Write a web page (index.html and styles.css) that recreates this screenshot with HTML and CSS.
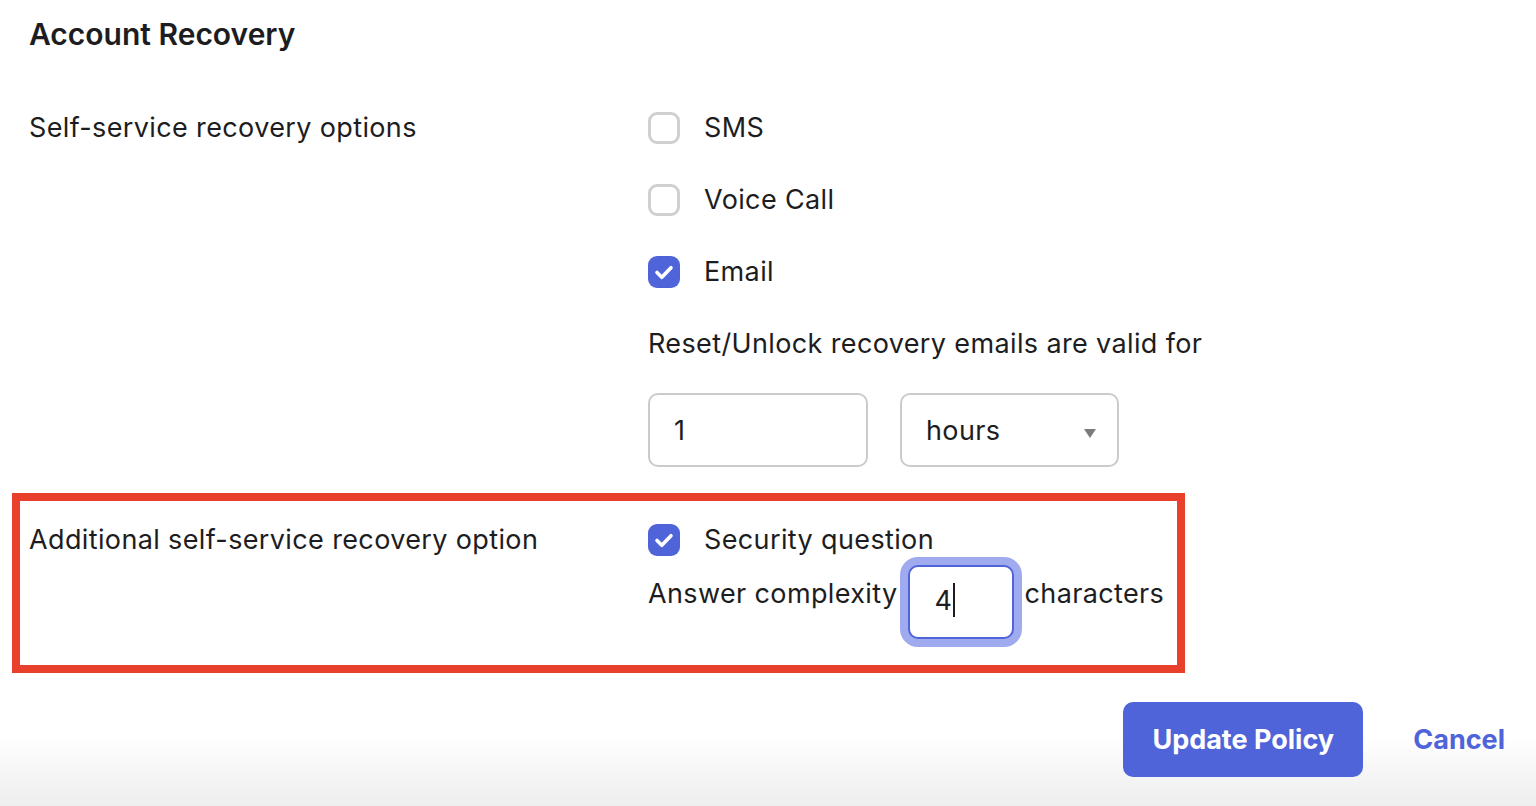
FILE: index.html
```html
<!DOCTYPE html>
<html>
  <head>
    <title>Account Recovery</title>
    <link rel="stylesheet" href="styles.css">
  </head>
  <body>
    <main class="page">
      <h2 class="title">Account Recovery</h2>

      <div class="row">
        <div class="label">Self-service recovery options</div>
        <div class="field">
          <div class="check"><span class="box"></span>SMS</div>
          <div class="check"><span class="box"></span>Voice Call</div>
          <div class="check"><span class="box checked"><svg viewBox="0 0 32 32"><path d="M9 16.5l4.8 4.8 9.2-9.6"/></svg></span>Email</div>
          <div class="hint">Reset/Unlock recovery emails are valid for</div>
          <div class="inputs">
            <div class="input">1</div>
            <div class="input select">hours<span class="caret"></span></div>
          </div>
        </div>
      </div>

      <div class="row highlight">
        <div class="label">Additional self-service recovery option</div>
        <div class="field">
          <div class="check"><span class="box checked"><svg viewBox="0 0 32 32"><path d="M9 16.5l4.8 4.8 9.2-9.6"/></svg></span>Security question</div>
          <div class="complexity">
            <span class="inline-text">Answer complexity</span>
            <div class="input small focused">4<span class="cursor"></span></div>
            <span class="inline-text">characters</span>
          </div>
        </div>
      </div>

      <div class="actions">
        <button class="primary">Update Policy</button>
        <a class="cancel">Cancel</a>
      </div>
    </main>
  </body>
</html>
```

FILE: styles.css
```css
html, body {
  margin: 0;
  padding: 0;
  height: 100%;
}

body {
  font-family: Inter, "Noto Sans", sans-serif;
  font-size: 27px;
  letter-spacing: 0.37px;
  color: #1d1d21;
  background: linear-gradient(to bottom, #ffffff 735px, #eeeeee 806px);
  overflow: hidden;
}

.page {
  padding: 0 31px 0 29px;
}

.title {
  margin: 16px 0 0 0;
  font-size: 30px;
  line-height: 36px;
  font-weight: 600;
  letter-spacing: 0;
}

.row {
  display: grid;
  grid-template-columns: 619px 1fr;
  margin-top: 60px;
}

.label {
  line-height: 32px;
}

.check {
  display: flex;
  align-items: center;
  height: 32px;
  line-height: 32px;
  margin-bottom: 40px;
}

.box {
  box-sizing: border-box;
  width: 32px;
  height: 32px;
  border: 3px solid #d0d0d0;
  border-radius: 9px;
  margin-right: 24px;
  background: #fff;
}

.box.checked {
  border: none;
  background: #5064d9;
}

.box svg {
  display: block;
  width: 32px;
  height: 32px;
}

.box svg path {
  fill: none;
  stroke: #fff;
  stroke-width: 3.6;
  stroke-linecap: round;
  stroke-linejoin: round;
}

.hint {
  line-height: 32px;
}

.inputs {
  display: flex;
  gap: 32px;
  margin-top: 33px;
}

.input {
  box-sizing: border-box;
  width: 220px;
  height: 74px;
  border: 2px solid #cbcbcb;
  border-radius: 10px;
  padding-left: 24px;
  display: flex;
  align-items: center;
  background: #fff;
}

.select {
  width: 219px;
  position: relative;
}

.caret {
  position: absolute;
  right: 21px;
  top: 34px;
  width: 0;
  height: 0;
  border-left: 6px solid transparent;
  border-right: 6px solid transparent;
  border-top: 9px solid #7b7b7b;
}

.highlight {
  box-sizing: border-box;
  width: 1173px;
  margin: 26px 0 0 -17px;
  border: 8px solid #e8402a;
  padding: 23px 0 18px 9px;
  grid-template-columns: 619px 1fr;
}

.highlight .check {
  margin-bottom: 9px;
}

.complexity {
  display: flex;
  align-items: flex-start;
}

.inline-text {
  line-height: 32px;
  margin-top: 13px;
}

.small {
  width: 106px;
  margin: 0 11px 8px 10px;
  padding-left: 25px;
  padding-bottom: 4px;
}

.focused {
  border-color: #5064d9;
  box-shadow: 0 0 0 8px #a0aaee;
}

.cursor {
  display: inline-block;
  width: 2px;
  height: 34px;
  background: #1d1d21;
  margin-left: 1px;
}

.actions {
  display: flex;
  justify-content: flex-end;
  align-items: center;
  gap: 50px;
  margin-top: 29px;
}

.primary {
  width: 240px;
  height: 75px;
  border: none;
  border-radius: 10px;
  background: #5064d9;
  color: #fff;
  font-family: Inter, "Noto Sans", sans-serif;
  font-size: 27px;
  font-weight: 700;
}

.cancel {
  color: #5064d9;
  font-weight: 700;
  font-size: 27px;
  letter-spacing: 0;
}
```
